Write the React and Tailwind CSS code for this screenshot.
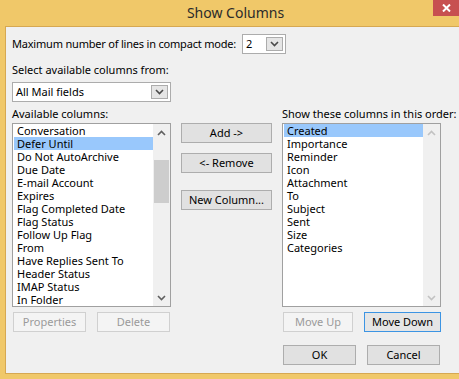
import React from "react"

const available = [
    "Conversation",
    "Defer Until",
    "Do Not AutoArchive",
    "Due Date",
    "E-mail Account",
    "Expires",
    "Flag Completed Date",
    "Flag Status",
    "Follow Up Flag",
    "From",
    "Have Replies Sent To",
    "Header Status",
    "IMAP Status",
    "In Folder",
]

const shown = ["Created", "Importance", "Reminder", "Icon", "Attachment", "To", "Subject", "Sent", "Size", "Categories"]

function Chevron({ up, color = "#606060" }) {
    return (
        <svg width="9" height="6" viewBox="0 0 9 6">
            <polyline
                points={up ? "1,5 4.5,1.5 8,5" : "1,1 4.5,4.5 8,1"}
                fill="none"
                stroke={color}
                strokeWidth="1.6"
            />
        </svg>
    )
}

function Combo({ value, className }) {
    return (
        <div className={`flex items-center h-[20px] bg-white border border-[#acacac] ${className}`}>
            <span className="flex-1 pl-[3px] leading-[18px]">{value}</span>
            <div className="flex items-center justify-center w-[17px] h-[14px] mr-[2px] bg-[#e5e5e5] border border-[#acacac]">
                <Chevron color="#4a4a4a" />
            </div>
        </div>
    )
}

function Button({ children, disabled, active, className = "w-[73px]" }) {
    const tone = disabled
        ? "bg-[#f4f4f4] border-[#d0d0d0] text-[#9a9a9a]"
        : active
            ? "bg-[#e5e5e5] border-[#3c94e3] text-black"
            : "bg-[#e1e1e1] border-[#adadad] text-black"
    return (
        <div className={`flex items-center justify-center h-[20px] border ${tone} ${className}`}>
            {children}
        </div>
    )
}

function ListBox({ items, selected, scrollable }) {
    return (
        <div className="flex h-[184px] bg-white border border-[#a0a0a0] overflow-hidden">
            <div className="flex-1 flex flex-col pl-[1px]">
                {items.map((item) => (
                    <div
                        key={item}
                        className={`h-[13px] shrink-0 leading-[13px] pl-[3px] whitespace-nowrap ${item === selected ? "bg-[#99c8fc]" : ""}`}
                    >
                        {item}
                    </div>
                ))}
            </div>
            {/* Scrollbar */}
            <div className="w-[17px] flex flex-col bg-[#f0f0f0]">
                <div className="h-[17px] flex items-center justify-center">
                    <Chevron up color={scrollable ? "#606060" : "#c2c2c2"} />
                </div>
                <div className="flex-1 px-[1px]">
                    {scrollable && <div className="mt-[19px] h-[43px] bg-[#cdcdcd]"></div>}
                </div>
                <div className="h-[17px] flex items-center justify-center">
                    <Chevron color={scrollable ? "#606060" : "#c2c2c2"} />
                </div>
            </div>
        </div>
    )
}

export default function App() {
    return (
        <div
            className="w-[459px] h-[379px] flex flex-col bg-[#f0c869] text-[11px] text-black overflow-hidden"
            style={{ fontFamily: "'Segoe UI', 'Noto Sans', 'Open Sans', sans-serif" }}
        >
            {/* Title bar */}
            <div className="relative h-[26px] shrink-0 flex items-center justify-center pl-[12px] pb-[2px]">
                <span className="text-[14px] text-[#2b2b2b]">Show Columns</span>
                <div className="absolute right-0 top-0 w-[26px] h-[16px] bg-[#c75050] flex items-center justify-center">
                    <svg width="9" height="8" viewBox="0 0 9 8">
                        <path d="M1 0.5 L8 7.5 M8 0.5 L1 7.5" stroke="white" strokeWidth="2" />
                    </svg>
                </div>
            </div>

            {/* Client area */}
            <div className="flex-1 pl-[5px] pb-[5px]">
                <div className="h-full bg-[#f0f0f0] border-t border-l border-b border-[#d6a852] pl-[6px] pt-[7px]">
                    {/* Compact mode row */}
                    <div className="flex items-center h-[20px]">
                        <span className="w-[230px] whitespace-nowrap tracking-[-0.2px]">Maximum number of lines in compact mode:</span>
                        <Combo value="2" className="w-[44px]" />
                    </div>

                    <div className="mt-[8px] h-[16px] leading-[16px]">Select available columns from:</div>
                    <Combo value="All Mail fields" className="w-[159px] mt-[4px]" />

                    {/* Columns section */}
                    <div className="flex mt-[3px]">
                        {/* Left */}
                        <div className="w-[159px] flex flex-col">
                            <div className="h-[17px] leading-[17px] mb-[1px]">Available columns:</div>
                            <ListBox items={available} selected="Defer Until" scrollable />
                            <div className="flex mt-[5px] pl-[1px] gap-[11px]">
                                <Button disabled>Properties</Button>
                                <Button disabled>Delete</Button>
                            </div>
                        </div>

                        {/* Middle */}
                        <div className="w-[91px] ml-[10px] flex flex-col pt-[18px]">
                            <Button className="w-[91px]">Add -&gt;</Button>
                            <Button className="w-[91px] mt-[10px]">&lt;- Remove</Button>
                            <Button className="w-[91px] mt-[17px]">New Column...</Button>
                        </div>

                        {/* Right */}
                        <div className="w-[159px] ml-[10px] flex flex-col">
                            <div className="h-[17px] leading-[17px] mb-[1px] whitespace-nowrap">Show these columns in this order:</div>
                            <ListBox items={shown} selected="Created" />
                            <div className="flex mt-[5px] pl-[1px] gap-[11px]">
                                <Button disabled>Move Up</Button>
                                <Button active className="w-[77px] shrink-0">Move Down</Button>
                            </div>
                            <div className="flex mt-[13px] pl-[1px] gap-[11px]">
                                <Button>OK</Button>
                                <Button>Cancel</Button>
                            </div>
                        </div>
                    </div>
                </div>
            </div>
        </div>
    )
}
